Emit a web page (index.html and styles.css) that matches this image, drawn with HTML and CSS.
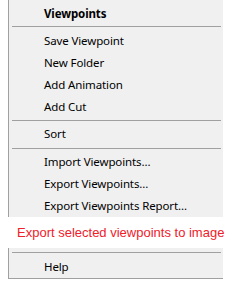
FILE: index.html
```html
<!DOCTYPE html>
<html>
<head>
<meta charset="utf-8">
<link rel="stylesheet" href="styles.css">
</head>
<body>
<div class="menu menu-top">
  <div class="item title">Viewpoints</div>
  <div class="sep sep-title"></div>
  <div class="item">Save Viewpoint</div>
  <div class="item">New Folder</div>
  <div class="item">Add Animation</div>
  <div class="item">Add Cut</div>
  <div class="sep"></div>
  <div class="item">Sort</div>
  <div class="sep sep-b"></div>
  <div class="item">Import Viewpoints...</div>
  <div class="item">Export Viewpoints...</div>
  <div class="item">Export Viewpoints Report...</div>
</div>
<div class="tip">Export selected viewpoints to image</div>
<div class="menu menu-bottom">
  <div class="sep sep-c"></div>
  <div class="item">Help</div>
</div>
</body>
</html>
```
FILE: styles.css
```css
html, body {
  margin: 0;
  padding: 0;
  background: #ffffff;
}
body {
  width: 244px;
  height: 303px;
  overflow: hidden;
  font-family: "Noto Sans", "Open Sans", sans-serif;
  font-size: 11.5px;
  letter-spacing: -0.12px;
  color: #000000;
}
.menu {
  margin-left: 8px;
  width: 214px;
  background: #f0f0f0;
  border-left: 1px solid #a0a0a0;
}
.menu-top {
  padding-top: 3px;
}
.menu-bottom {
  border-bottom: 1px solid #a0a0a0;
}
.item {
  height: 22px;
  line-height: 22px;
  padding-left: 35px;
  white-space: nowrap;
}
.title {
  font-weight: bold;
}
.sep {
  height: 5px;
  display: flex;
  flex-direction: column;
  padding-top: 2px;
  box-sizing: border-box;
}
.sep::before {
  content: "";
  display: block;
  height: 1px;
  margin: 0 2px 0 3px;
  background: #a0a0a0;
}
.sep-title {
  height: 5px;
  padding-top: 1px;
}
.sep-b {
  height: 6px;
  padding-top: 3px;
}
.sep-c {
  height: 8px;
  padding-top: 4px;
}
.tip {
  height: 31px;
  line-height: 31px;
  padding-left: 17px;
  background: #ffffff;
  color: #f0202a;
  font-family: "Liberation Sans", Arial, sans-serif;
  font-size: 13px;
  letter-spacing: 0;
  white-space: nowrap;
}
```
